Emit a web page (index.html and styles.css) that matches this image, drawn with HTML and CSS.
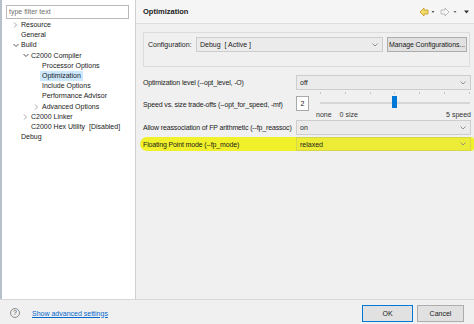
FILE: index.html
```html
<!DOCTYPE html>
<html lang="en">

<head>
    <meta charset="UTF-8">
    <title>Properties - Optimization</title>
    <link rel="stylesheet" href="styles.css">
</head>

<body>
    <div class="dialog">
        <div class="main">
            <aside class="sidebar">
                <div class="filter">type filter text</div>
                <ul class="tree">
                    <li class="node lvl0"><span class="twisty"><svg width="5" height="6" viewBox="0 0 5 6"><polyline points="1,0.5 3.5,3 1,5.5" fill="none" stroke="#a8a8a8" stroke-width="1"/></svg></span>Resource</li>
                    <li class="node lvl0"><span class="twisty"></span>General</li>
                    <li class="node lvl0"><span class="twisty"><svg width="6" height="5" viewBox="0 0 6 5"><polyline points="0.5,1 3,3.5 5.5,1" fill="none" stroke="#555" stroke-width="1"/></svg></span>Build</li>
                    <li class="node lvl1"><span class="twisty"><svg width="6" height="5" viewBox="0 0 6 5"><polyline points="0.5,1 3,3.5 5.5,1" fill="none" stroke="#555" stroke-width="1"/></svg></span>C2000 Compiler</li>
                    <li class="node lvl2"><span class="twisty"></span>Processor Options</li>
                    <li class="node lvl2"><span class="twisty"></span><span class="sel">Optimization</span></li>
                    <li class="node lvl2"><span class="twisty"></span>Include Options</li>
                    <li class="node lvl2"><span class="twisty"></span>Performance Advisor</li>
                    <li class="node lvl2"><span class="twisty"><svg width="5" height="6" viewBox="0 0 5 6"><polyline points="1,0.5 3.5,3 1,5.5" fill="none" stroke="#a8a8a8" stroke-width="1"/></svg></span>Advanced Options</li>
                    <li class="node lvl1"><span class="twisty"><svg width="5" height="6" viewBox="0 0 5 6"><polyline points="1,0.5 3.5,3 1,5.5" fill="none" stroke="#a8a8a8" stroke-width="1"/></svg></span>C2000 Linker</li>
                    <li class="node lvl1"><span class="twisty"></span>C2000 Hex Utility&nbsp; [Disabled]</li>
                    <li class="node lvl0"><span class="twisty"></span>Debug</li>
                </ul>
            </aside>

            <section class="panel">
                <div class="panel-head">
                    <span class="panel-title">Optimization</span>
                    <svg class="nav" width="54" height="10" viewBox="0 0 54 10">
                        <path d="M2,5 L6,1 L6,3 L10,3 L10,7 L6,7 L6,9 Z" fill="#f3d968" stroke="#c29a22" stroke-width="0.8"/>
                        <polygon points="13.5,4 16.5,4 15,6" fill="#555"/>
                        <path d="M31,5 L27,1 L27,3 L23,3 L23,7 L27,7 L27,9 Z" fill="#f6f6f6" stroke="#b0b0b0" stroke-width="0.8"/>
                        <polygon points="35.5,4 38.5,4 37,6" fill="#666"/>
                        <polygon points="46,3.5 51,3.5 48.5,6.5" fill="#333"/>
                    </svg>
                </div>

                <div class="config-box">
                    <span class="config-label">Configuration:</span>
                    <div class="combo config-combo">
                        <span>Debug&nbsp; [ Active ]</span>
                        <svg class="chev" width="6" height="4" viewBox="0 0 6 4"><polyline points="0.5,0.5 3,3 5.5,0.5" fill="none" stroke="#888" stroke-width="0.9"/></svg>
                    </div>
                    <button class="btn manage">Manage Configurations...</button>
                </div>

                <div class="options">
                    <div class="opt-row">
                        <span class="opt-label">Optimization level (--opt_level, -O)</span>
                        <div class="combo">
                            <span>off</span>
                            <svg class="chev" width="6" height="4" viewBox="0 0 6 4"><polyline points="0.5,0.5 3,3 5.5,0.5" fill="none" stroke="#888" stroke-width="0.9"/></svg>
                        </div>
                    </div>

                    <div class="opt-row speed">
                        <span class="opt-label">Speed vs. size trade-offs (--opt_for_speed, -mf)</span>
                        <div class="spin">2</div>
                        <div class="slider">
                            <div class="ticks">
                                <span></span><span></span><span></span><span></span><span></span><span></span><span></span>
                            </div>
                            <div class="track"><span class="thumb"></span></div>
                            <div class="scale">
                                <span class="scale-none">none</span>
                                <span class="scale-zero">0 size</span>
                                <span class="scale-max">5 speed</span>
                            </div>
                        </div>
                    </div>

                    <div class="opt-row">
                        <span class="opt-label">Allow reassociation of FP arithmetic (--fp_reassoc)</span>
                        <div class="combo">
                            <span>on</span>
                            <svg class="chev" width="6" height="4" viewBox="0 0 6 4"><polyline points="0.5,0.5 3,3 5.5,0.5" fill="none" stroke="#888" stroke-width="0.9"/></svg>
                        </div>
                    </div>

                    <div class="opt-row marked">
                        <span class="opt-label">Floating Point mode (--fp_mode)</span>
                        <div class="combo">
                            <span>relaxed</span>
                            <svg class="chev" width="6" height="4" viewBox="0 0 6 4"><polyline points="0.5,0.5 3,3 5.5,0.5" fill="none" stroke="#888" stroke-width="0.9"/></svg>
                        </div>
                    </div>
                </div>
            </section>
        </div>

        <footer class="button-bar">
            <span class="help">?</span>
            <a class="link" href="#">Show advanced settings</a>
            <span class="spacer"></span>
            <button class="btn ok">OK</button>
            <button class="btn cancel">Cancel</button>
        </footer>
    </div>
</body>

</html>
```

FILE: styles.css
```css
* {
    margin: 0;
    padding: 0;
    box-sizing: border-box;
}

body {
    font-family: "Liberation Sans", Arial, sans-serif;
    font-size: 7px;
    color: #1a1a1a;
    background-color: #f0f0f0;
}

.dialog {
    width: 474px;
    height: 324px;
    display: flex;
    flex-direction: column;
}

.main {
    display: flex;
    height: 300px;
    border-bottom: 1px solid #d7d7d7;
}

/* left tree */
.sidebar {
    width: 136px;
    background: #fff;
    border-left: 2px solid #b7c0c9;
    border-right: 1px solid #d0d0d0;
}

.filter {
    margin: 5px 0 0 4px;
    width: 123px;
    height: 14px;
    border: 1px solid #b9b9b9;
    color: #6f6f6f;
    padding-left: 2px;
    line-height: 12px;
}

.tree {
    list-style: none;
    margin-top: 1px;
}

.node {
    display: flex;
    align-items: center;
    height: 10.2px;
    line-height: 10px;
    white-space: nowrap;
}

.lvl0 {
    padding-left: 10px;
}

.lvl1 {
    padding-left: 20px;
}

.lvl2 {
    padding-left: 31px;
}

.twisty {
    width: 9px;
    height: 10px;
    flex: none;
    display: flex;
    align-items: center;
    padding-left: 1px;
}

.sel {
    background: #cce8ff;
    margin-left: -2px;
    padding: 0 2px;
}

/* right page */
.panel {
    flex: 1;
    background: #f0f0f0;
}

.panel-head {
    height: 24px;
    background: #f5f5f5;
    border-bottom: 1px solid #dedede;
    display: flex;
    align-items: center;
    justify-content: space-between;
    padding: 0 2px 0 7px;
}

.panel-title {
    font-weight: bold;
    font-size: 7.5px;
}

.config-box {
    margin: 8px 4px 0 7px;
    height: 35px;
    border: 1px solid #dcdcdc;
    display: flex;
    align-items: flex-start;
    padding: 4px 0 0 4px;
}

.config-label {
    width: 48px;
    line-height: 15px;
}

.combo {
    height: 15px;
    width: 175px;
    border: 1px solid #cdcdcd;
    background: #ebebeb;
    display: flex;
    align-items: center;
    justify-content: space-between;
    padding: 0 4px 0 3px;
}

.config-combo {
    width: 187px;
}

.btn {
    font: inherit;
    color: #1a1a1a;
    height: 15px;
    border: 1px solid #adadad;
    background: #e1e1e1;
    white-space: nowrap;
}

.manage {
    width: 80px;
    margin-left: 4px;
    overflow: hidden;
    letter-spacing: -0.1px;
}

.options {
    padding: 8px 3px 0 7px;
}

.opt-row {
    display: flex;
    align-items: center;
    height: 15px;
    margin-top: 1px;
}

.opt-row:first-child {
    margin-top: 0;
}

.opt-label {
    width: 153px;
    flex: none;
    white-space: nowrap;
    letter-spacing: -0.15px;
}

.speed {
    height: 28px;
    align-items: flex-start;
}

.speed .opt-label {
    margin-top: 9px;
    line-height: 9px;
}

.spin {
    width: 13px;
    height: 15px;
    margin-top: 5px;
    border: 1px solid #a9a9a9;
    background: #fff;
    text-align: center;
    line-height: 13px;
}

.slider {
    width: 162px;
}

.ticks {
    margin: 1px 1px 0 11px;
    height: 2px;
    display: flex;
    justify-content: space-between;
}

.ticks span {
    width: 1px;
    height: 2px;
    background: #c4c4c4;
}

.track {
    position: relative;
    margin: 8px 1px 0 11px;
    height: 2px;
    background: #d6d6d6;
}

.thumb {
    position: absolute;
    left: 72px;
    top: -6px;
    width: 5px;
    height: 12px;
    background: #0078d7;
}

.scale {
    display: flex;
    margin-top: 6px;
    line-height: 9px;
    color: #333;
}

.scale-none {
    margin-left: 7px;
}

.scale-zero {
    margin-left: 8px;
}

.scale-max {
    margin-left: auto;
}

.marked {
    height: 14px;
    margin: 2px -3px 0 -3px;
    padding: 0 3px;
    background: #f1f12b;
    border-radius: 7px 3px 3px 7px;
}

.marked .combo {
    height: 14px;
    background: #ecec36;
    border-color: #d6d64a;
}

/* bottom buttons */
.button-bar {
    flex: 1;
    display: flex;
    align-items: center;
    padding: 2px 10px 0 10px;
}

.help {
    width: 10px;
    height: 10px;
    border: 1px solid #8a8a8a;
    border-radius: 50%;
    text-align: center;
    line-height: 8px;
    color: #555;
}

.link {
    margin-left: 12px;
    color: #0066cc;
}

.spacer {
    flex: 1;
}

.ok {
    width: 51px;
    height: 17px;
    border-color: #0078d7;
}

.cancel {
    width: 47px;
    height: 17px;
    margin-left: 4px;
}
```
